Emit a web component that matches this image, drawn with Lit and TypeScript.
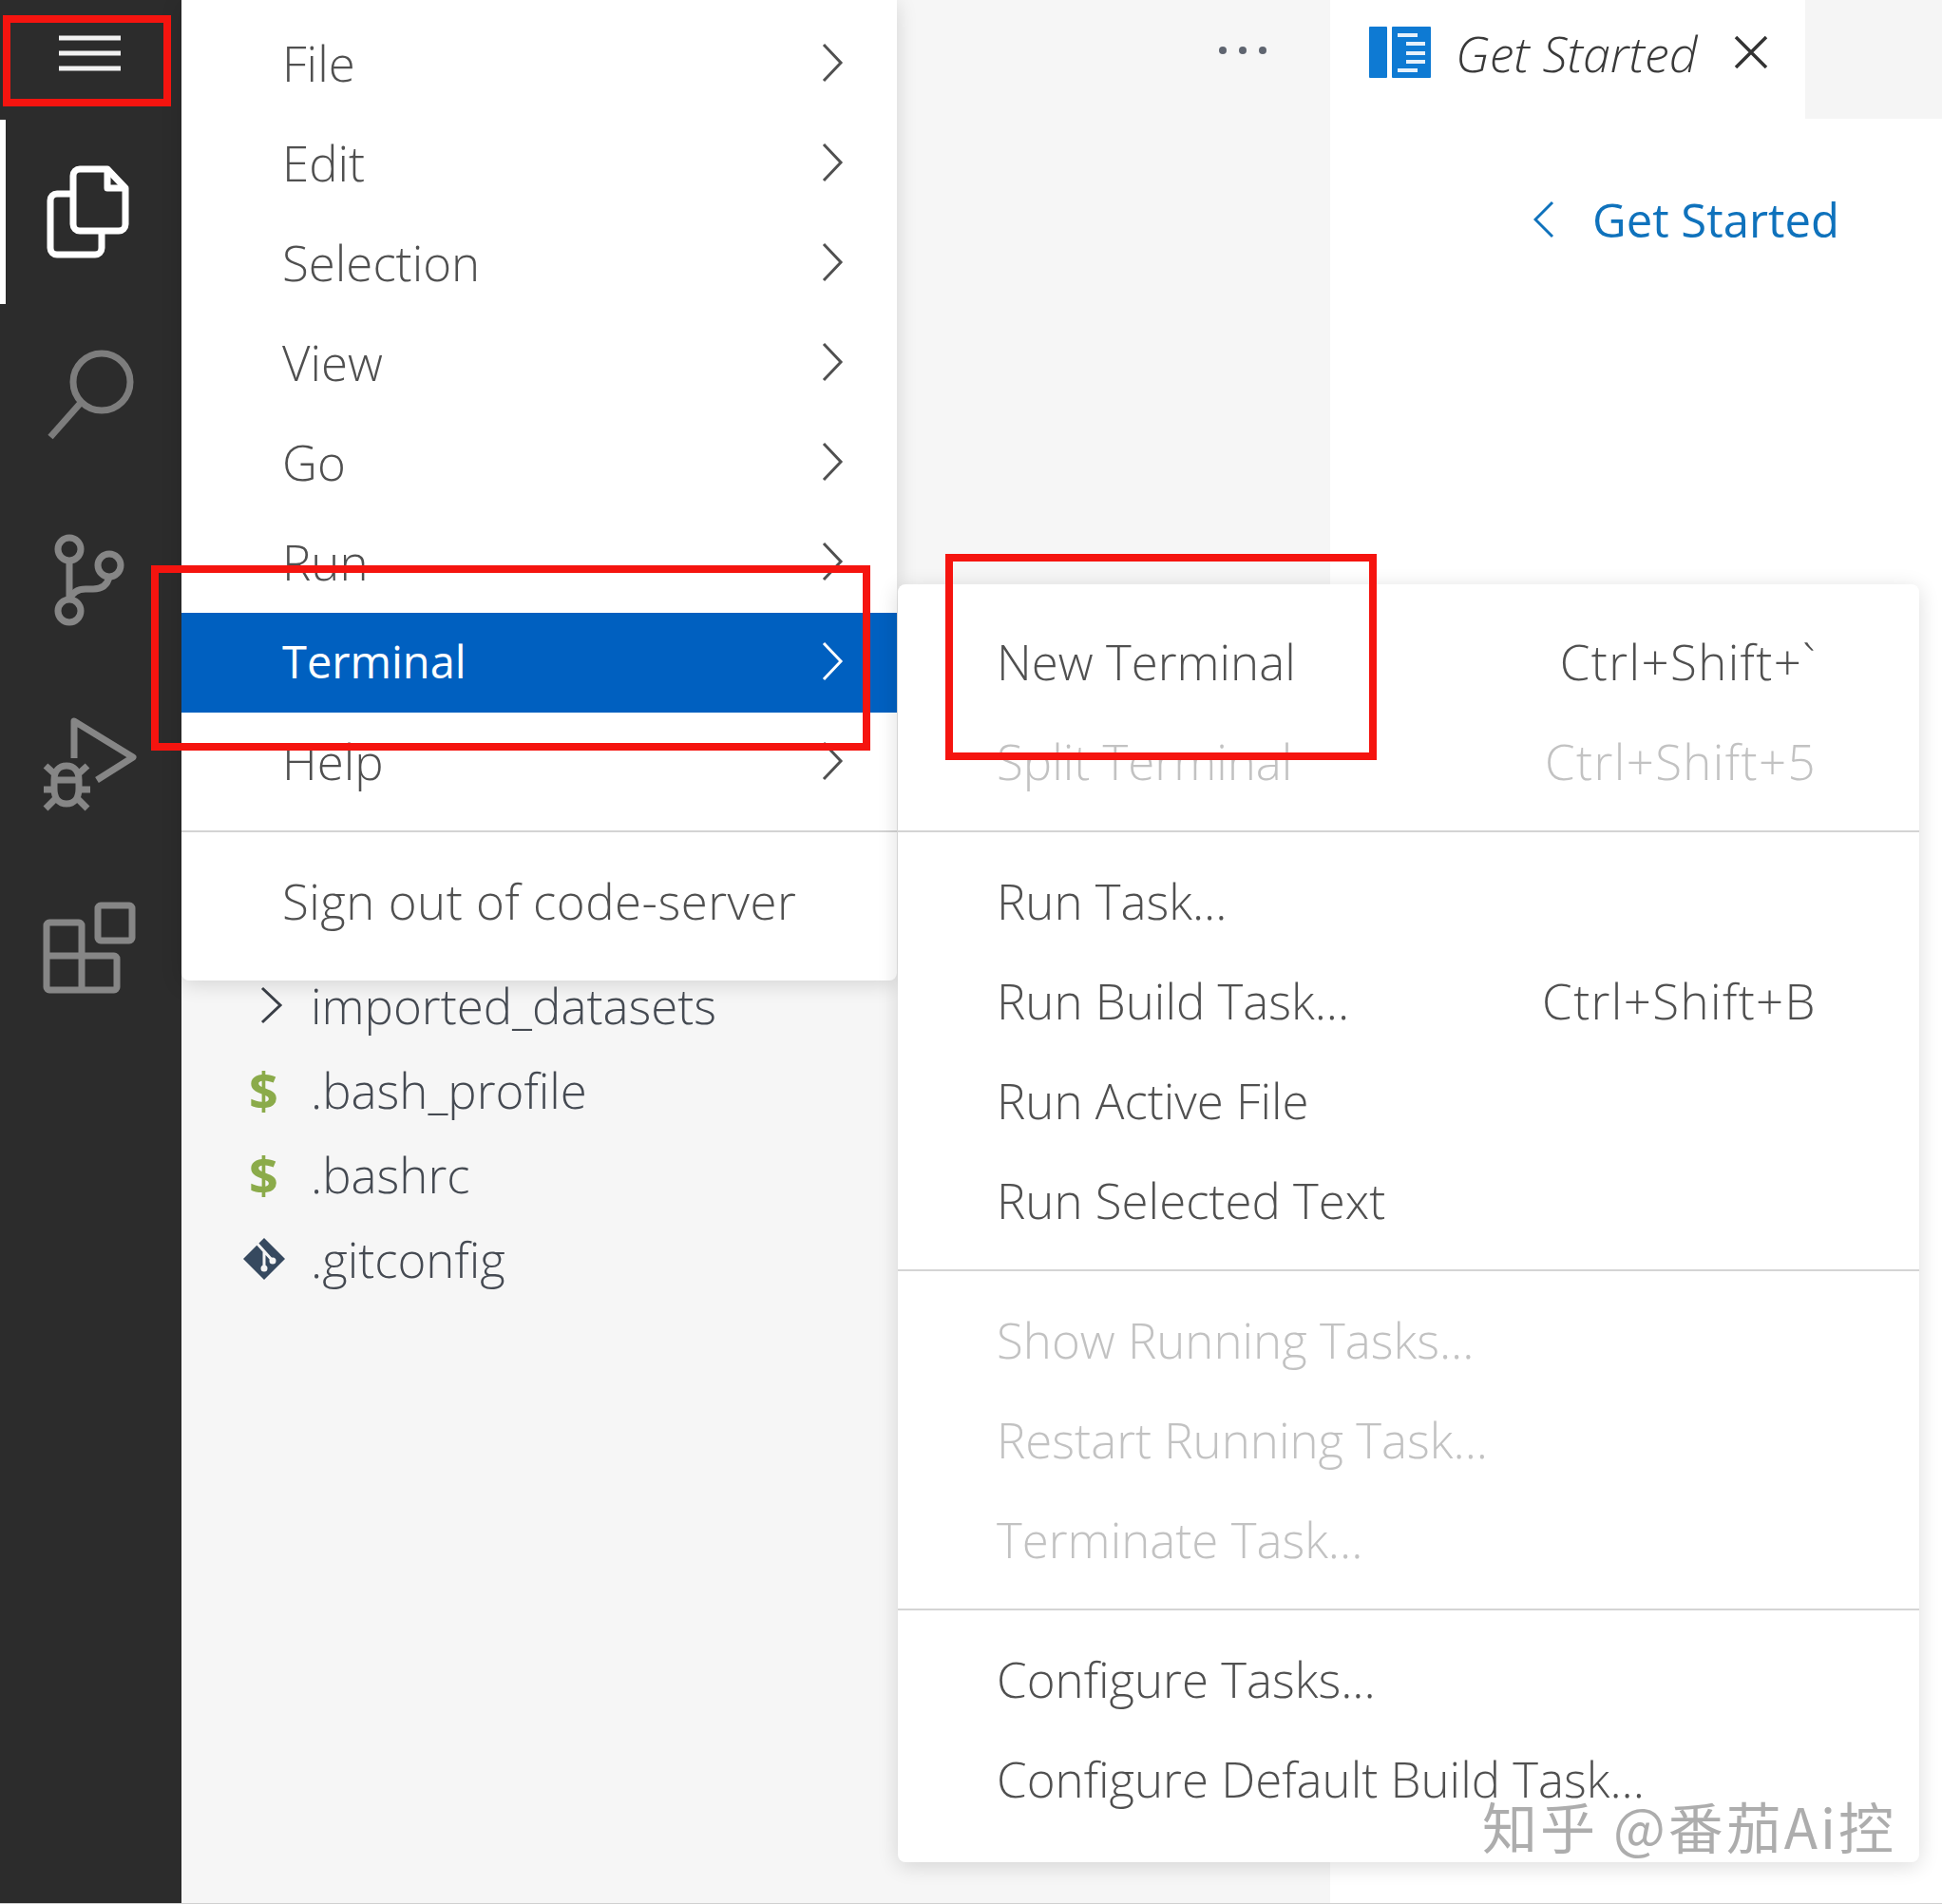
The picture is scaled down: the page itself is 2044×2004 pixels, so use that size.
import { LitElement, html, css, svg } from "lit";
import { customElement } from "lit/decorators.js";

type Item = { label: string; key?: string; off?: boolean; arrow?: boolean; hot?: boolean } | null;

const MAIN: Item[] = [
  { label: "File", arrow: true },
  { label: "Edit", arrow: true },
  { label: "Selection", arrow: true },
  { label: "View", arrow: true },
  { label: "Go", arrow: true },
  { label: "Run", arrow: true },
  { label: "Terminal", arrow: true, hot: true },
  { label: "Help", arrow: true },
  null,
  { label: "Sign out of code-server" },
];

const SUB: Item[] = [
  { label: "New Terminal", key: "Ctrl+Shift+`" },
  { label: "Split Terminal", key: "Ctrl+Shift+5", off: true },
  null,
  { label: "Run Task..." },
  { label: "Run Build Task...", key: "Ctrl+Shift+B" },
  { label: "Run Active File" },
  { label: "Run Selected Text" },
  null,
  { label: "Show Running Tasks...", off: true },
  { label: "Restart Running Task...", off: true },
  { label: "Terminate Task...", off: true },
  null,
  { label: "Configure Tasks..." },
  { label: "Configure Default Build Task..." },
];

const chevron = svg`<path d="M3 2 L21 21 L3 40" fill="none" stroke="currentColor" stroke-width="3"/>`;

@customElement("app-root")
export class AppRoot extends LitElement {
  static styles = css`
    :host {
      display: grid;
      grid-template-columns: 191px 1209px 644px;
      width: 2044px;
      height: 2004px;
      position: relative;
      overflow: hidden;
      font-family: "Open Sans", "Noto Sans", sans-serif;
      font-weight: 300;
      font-size: 51px;
      color: #4a4a4a;
      background: #fff;
      border-bottom: 1px solid #cfcfcf;
      box-sizing: border-box;
    }
    .activity {
      background: #2c2c2c;
      display: flex;
      flex-direction: column;
    }
    .cell {
      display: block;
      width: 191px;
      flex: none;
    }
    .active {
      box-shadow: inset 6px 0 #fff;
    }
    .side {
      background: #f6f6f6;
      display: flex;
      flex-direction: column;
    }
    .side-head {
      height: 125px;
      display: flex;
      justify-content: flex-end;
      align-items: center;
      gap: 13px;
      padding: 0 67px 19px 0;
      box-sizing: border-box;
    }
    .dot {
      width: 8px;
      height: 8px;
      border-radius: 50%;
      background: #5f6570;
    }
    .tree {
      margin-top: 891px;
      display: flex;
      flex-direction: column;
    }
    .file {
      height: 89px;
      display: grid;
      grid-template-columns: 57px 1fr;
      align-items: center;
      column-gap: 21px;
      padding: 0 0 5px 58px;
      box-sizing: border-box;
      color: #454a52;
      font-size: 51px;
    }
    .ficon {
      display: flex;
      justify-content: center;
      align-items: center;
      height: 84px;
    }
    .chev {
      margin-left: 16px;
    }
    .dollar {
      color: #8bab4a;
      font-weight: 700;
      font-size: 54px;
      line-height: 1;
    }
    .editor {
      background: #fff;
      display: flex;
      flex-direction: column;
    }
    .tabs {
      display: flex;
      height: 125px;
      flex: none;
    }
    .tab {
      width: 500px;
      display: flex;
      align-items: center;
      padding: 0 0 15px 41px;
      box-sizing: border-box;
      color: #3a3a3a;
    }
    .tab-title {
      font-style: italic;
      margin-left: 26px;
      font-size: 52px;
      white-space: nowrap;
    }
    .tab-close {
      margin-left: 38px;
      display: block;
    }
    .tab-fill {
      flex: 1;
      background: #f5f5f5;
    }
    .crumb {
      display: flex;
      align-items: center;
      margin-top: 67px;
      padding-left: 214px;
      gap: 40px;
      color: #0f72bc;
      font-weight: 400;
      font-size: 49px;
      height: 78px;
    }
    .menu {
      position: absolute;
      background: #fff;
      display: flex;
      flex-direction: column;
      box-shadow: 0 4px 22px rgba(0, 0, 0, 0.14);
      box-sizing: border-box;
      color: #505050;
    }
    .main {
      left: 191px;
      top: 0;
      width: 753px;
      padding: 15px 0 30px;
      border-radius: 0 0 8px 8px;
    }
    .main .row:last-child span {
      letter-spacing: 0.5px;
    }
    .sub {
      left: 945px;
      top: 615px;
      width: 1075px;
      height: 1345px;
      padding: 30px 0 34px;
      border-radius: 8px;
    }
    .row {
      height: 105px;
      flex: none;
      display: flex;
      align-items: center;
      justify-content: space-between;
      white-space: nowrap;
      box-sizing: border-box;
    }
    .main .row {
      padding: 0 56px 4px 106px;
    }
    .sub .row {
      padding: 0 108px 4px 104px;
    }
    .row svg {
      display: block;
    }
    .key {
      letter-spacing: 1.4px;
    }
    .hot {
      background: #0060c0;
      color: #fff;
      font-weight: 400;
      font-size: 47px;
    }
    .off {
      color: #c2c2c2;
    }
    .sep {
      height: 2px;
      margin: 19px 0 21px;
      flex: none;
      background: #d4d4d4;
    }
    .red {
      position: absolute;
      box-sizing: border-box;
      border: 8px solid #f5140f;
    }
    .r1 {
      left: 3px;
      top: 16px;
      width: 177px;
      height: 96px;
    }
    .r2 {
      left: 159px;
      top: 595px;
      width: 757px;
      height: 195px;
    }
    .r3 {
      left: 995px;
      top: 583px;
      width: 454px;
      height: 217px;
    }
    .mark {
      position: absolute;
      left: 1560px;
      top: 1892px;
      font-family: "Noto Sans CJK SC", "Liberation Sans", sans-serif;
      font-weight: 400;
      font-size: 58px;
      letter-spacing: 3px;
      line-height: 58px;
      color: #adadad;
      white-space: nowrap;
    }
  `;

  private renderItem(it: Item) {
    if (!it) return html`<div class="sep"></div>`;
    const cls = `row${it.hot ? " hot" : ""}${it.off ? " off" : ""}`;
    return html`<div class=${cls}>
      <span>${it.label}</span>
      ${it.key ? html`<span class="key">${it.key}</span>` : ""}
      ${it.arrow ? html`<svg width="24" height="42" viewBox="0 0 24 42">${chevron}</svg>` : ""}
    </div>`;
  }

  private renderActivity() {
    return html`<nav class="activity">
      <svg class="cell" height="126" viewBox="0 0 191 126">
        <path d="M62 40H127M62 56H127M62 72H127" stroke="#f2f2f2" stroke-width="5" fill="none" />
      </svg>
      <svg class="cell active" height="194" viewBox="0 126 191 194" fill="none" stroke="#fff" stroke-width="7" stroke-linejoin="round">
        <path d="M74 204H60a7 7 0 0 0-7 7V261a7 7 0 0 0 7 7H100a7 7 0 0 0 7-7V244" />
        <path d="M84 178H113L132 198V236a7 7 0 0 1-7 7H84a7 7 0 0 1-7-7V185a7 7 0 0 1 7-7Z" />
        <path d="M113 178V198H132" />
      </svg>
      <svg class="cell" height="190" viewBox="0 320 191 190" fill="none" stroke="#7d7d7d" stroke-width="7">
        <circle cx="107" cy="402" r="30" />
        <path d="M84 425L53 460" />
      </svg>
      <svg class="cell" height="200" viewBox="0 510 191 200" fill="none" stroke="#868686" stroke-width="7">
        <circle cx="73" cy="578" r="12" />
        <circle cx="115" cy="595" r="12" />
        <circle cx="73" cy="643" r="12" />
        <path d="M73 590V631" />
        <path d="M115 607C113 616 107 620 98 620H90C82 620 76 624 73 631" />
      </svg>
      <svg class="cell" height="180" viewBox="0 710 191 180" fill="none" stroke="#868686" stroke-width="7" stroke-linejoin="round">
        <path d="M78 798V759L140 797L102 821" />
        <path d="M57 821V830C57 840 62 846 70 846C78 846 83 840 83 830V821C83 812 78 806 70 806C62 806 57 812 57 821Z" />
        <path d="M57 821H83M46 831H57M83 831H95M48 806L58 815M92 806L82 815M48 851L58 841M92 851L82 841" />
      </svg>
      <svg class="cell" height="200" viewBox="0 890 191 200" fill="none" stroke="#868686" stroke-width="7" stroke-linejoin="round">
        <rect x="103" y="953" width="36" height="37" rx="3" />
        <path d="M86 1042H52a3 3 0 0 1-3-3V974a3 3 0 0 1 3-3H83a3 3 0 0 1 3 3V1042" />
        <path d="M49 1006H120a3 3 0 0 1 3 3V1039a3 3 0 0 1-3 3H86" />
      </svg>
    </nav>`;
  }

  private renderSidebar() {
    return html`<aside class="side">
      <div class="side-head">
        <span class="dot"></span><span class="dot"></span><span class="dot"></span>
      </div>
      <div class="tree">
        <div class="file">
          <span class="ficon">
            <svg class="chev" width="24" height="40" viewBox="0 0 24 40">
              <path d="M2 2L21 20L2 38" fill="none" stroke="#3a3f47" stroke-width="3" />
            </svg>
          </span>
          <span>imported_datasets</span>
        </div>
        <div class="file"><span class="ficon dollar">$</span><span>.bash_profile</span></div>
        <div class="file"><span class="ficon dollar">$</span><span>.bashrc</span></div>
        <div class="file">
          <span class="ficon">
            <svg width="44" height="44" viewBox="0 0 44 44">
              <path d="M22 0L44 22L22 44L0 22Z" fill="#36495f" />
              <path d="M13 4L31 24M22 14V34" fill="none" stroke="#f4f4f4" stroke-width="3" />
              <circle cx="22" cy="32" r="3.5" fill="#f4f4f4" />
              <circle cx="31" cy="24" r="3.5" fill="#f4f4f4" />
            </svg>
          </span>
          <span>.gitconfig</span>
        </div>
      </div>
    </aside>`;
  }

  private renderEditor() {
    return html`<main class="editor">
      <div class="tabs">
        <div class="tab">
          <svg width="65" height="54" viewBox="0 0 65 54">
            <rect x="0" y="0" width="19" height="54" rx="1" fill="#0e7ad3" />
            <rect x="24" y="0" width="41" height="54" rx="1" fill="#0e7ad3" />
            <path d="M30 9H51M39 18H59M39 28H59M39 37H59M30 46H51" stroke="#e6f1fb" stroke-width="4" />
          </svg>
          <span class="tab-title">Get Started</span>
          <svg class="tab-close" width="36" height="34" viewBox="0 0 36 34">
            <path d="M2 1L34 33M34 1L2 33" stroke="#333" stroke-width="3.5" fill="none" />
          </svg>
        </div>
        <div class="tab-fill"></div>
      </div>
      <div class="crumb">
        <svg width="22" height="40" viewBox="0 0 22 40">
          <path d="M20 2L2 20L20 38" fill="none" stroke="#0f72bc" stroke-width="3" />
        </svg>
        <span>Get Started</span>
      </div>
    </main>`;
  }

  render() {
    return html`
      ${this.renderActivity()} ${this.renderSidebar()} ${this.renderEditor()}
      <div class="menu main">${MAIN.map((i) => this.renderItem(i))}</div>
      <div class="menu sub">${SUB.map((i) => this.renderItem(i))}</div>
      <div class="mark">知乎 @番茄Ai控</div>
      <div class="red r1"></div>
      <div class="red r2"></div>
      <div class="red r3"></div>
    `;
  }
}
